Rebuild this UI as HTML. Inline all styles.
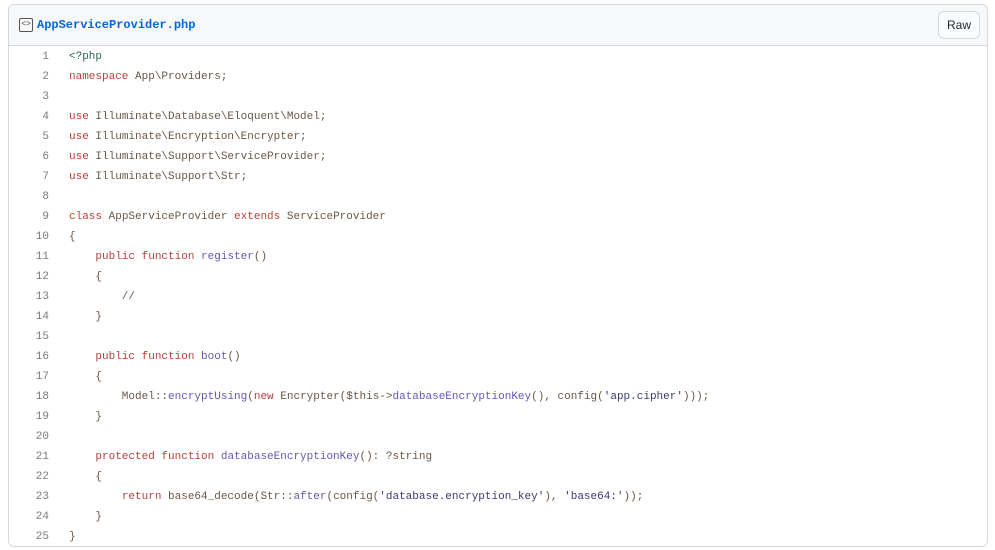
<!DOCTYPE html>
<html><head><meta charset="utf-8"><style>
body{margin:0;background:#fff;font-family:"Liberation Sans",sans-serif;}
.box{position:absolute;left:8px;top:4px;width:978px;height:541px;border:1px solid #d5d8dc;border-radius:6px;overflow:hidden;}
.hd{height:40px;background:#f6f8fa;border-bottom:1px solid #d5d8dc;position:relative;}
.ic{position:absolute;left:10px;top:13px;width:12px;height:12px;border:1px solid #555;border-radius:2px;font:8px "Liberation Mono",monospace;line-height:12px;text-align:center;color:#444;}
.fn{position:absolute;left:28px;top:13px;font:bold 12px "Liberation Mono",monospace;color:#0366d6;}
.raw{position:absolute;left:929px;top:6px;width:40px;height:26px;border:1px solid #d5d8dc;border-radius:6px;background:#fafbfc;font-size:12px;line-height:26px;text-align:center;color:#24292e;}
pre{margin:0;position:absolute;top:42px;left:0;font:11px/20px "Liberation Mono",monospace;color:#6a5746;}
.ln{display:inline-block;width:40px;text-align:right;color:#7a7a7a;margin-right:20px;}
.k{color:#b8403a}.f{color:#6458b0}.s{color:#3a3a70}
</style></head><body>
<div class="box"><div class="hd"><div class="ic">&lt;&gt;</div><div class="fn">AppServiceProvider.php</div><div class="raw">Raw</div></div>
<pre><span class="ln">1</span><span style="color:#2a6a4a">&lt;?php</span>
<span class="ln">2</span><span class="k">namespace</span> App\Providers;
<span class="ln">3</span>
<span class="ln">4</span><span class="k">use</span> Illuminate\Database\Eloquent\Model;
<span class="ln">5</span><span class="k">use</span> Illuminate\Encryption\Encrypter;
<span class="ln">6</span><span class="k">use</span> Illuminate\Support\ServiceProvider;
<span class="ln">7</span><span class="k">use</span> Illuminate\Support\Str;
<span class="ln">8</span>
<span class="ln">9</span><span class="k">class</span> AppServiceProvider <span class="k">extends</span> ServiceProvider
<span class="ln">10</span>{
<span class="ln">11</span>    <span class="k">public function</span> <span class="f">register</span>()
<span class="ln">12</span>    {
<span class="ln">13</span>        //
<span class="ln">14</span>    }
<span class="ln">15</span>
<span class="ln">16</span>    <span class="k">public function</span> <span class="f">boot</span>()
<span class="ln">17</span>    {
<span class="ln">18</span>        Model::<span class="f">encryptUsing</span>(<span class="k">new</span> Encrypter($this-&gt;<span class="f">databaseEncryptionKey</span>(), config(<span class="s">'app.cipher'</span>)));
<span class="ln">19</span>    }
<span class="ln">20</span>
<span class="ln">21</span>    <span class="k">protected function</span> <span class="f">databaseEncryptionKey</span>(): ?string
<span class="ln">22</span>    {
<span class="ln">23</span>        <span class="k">return</span> base64_decode(Str::<span class="f">after</span>(config(<span class="s">'database.encryption_key'</span>), <span class="s">'base64:'</span>));
<span class="ln">24</span>    }
<span class="ln">25</span>}</pre>
</div>
</body></html>
